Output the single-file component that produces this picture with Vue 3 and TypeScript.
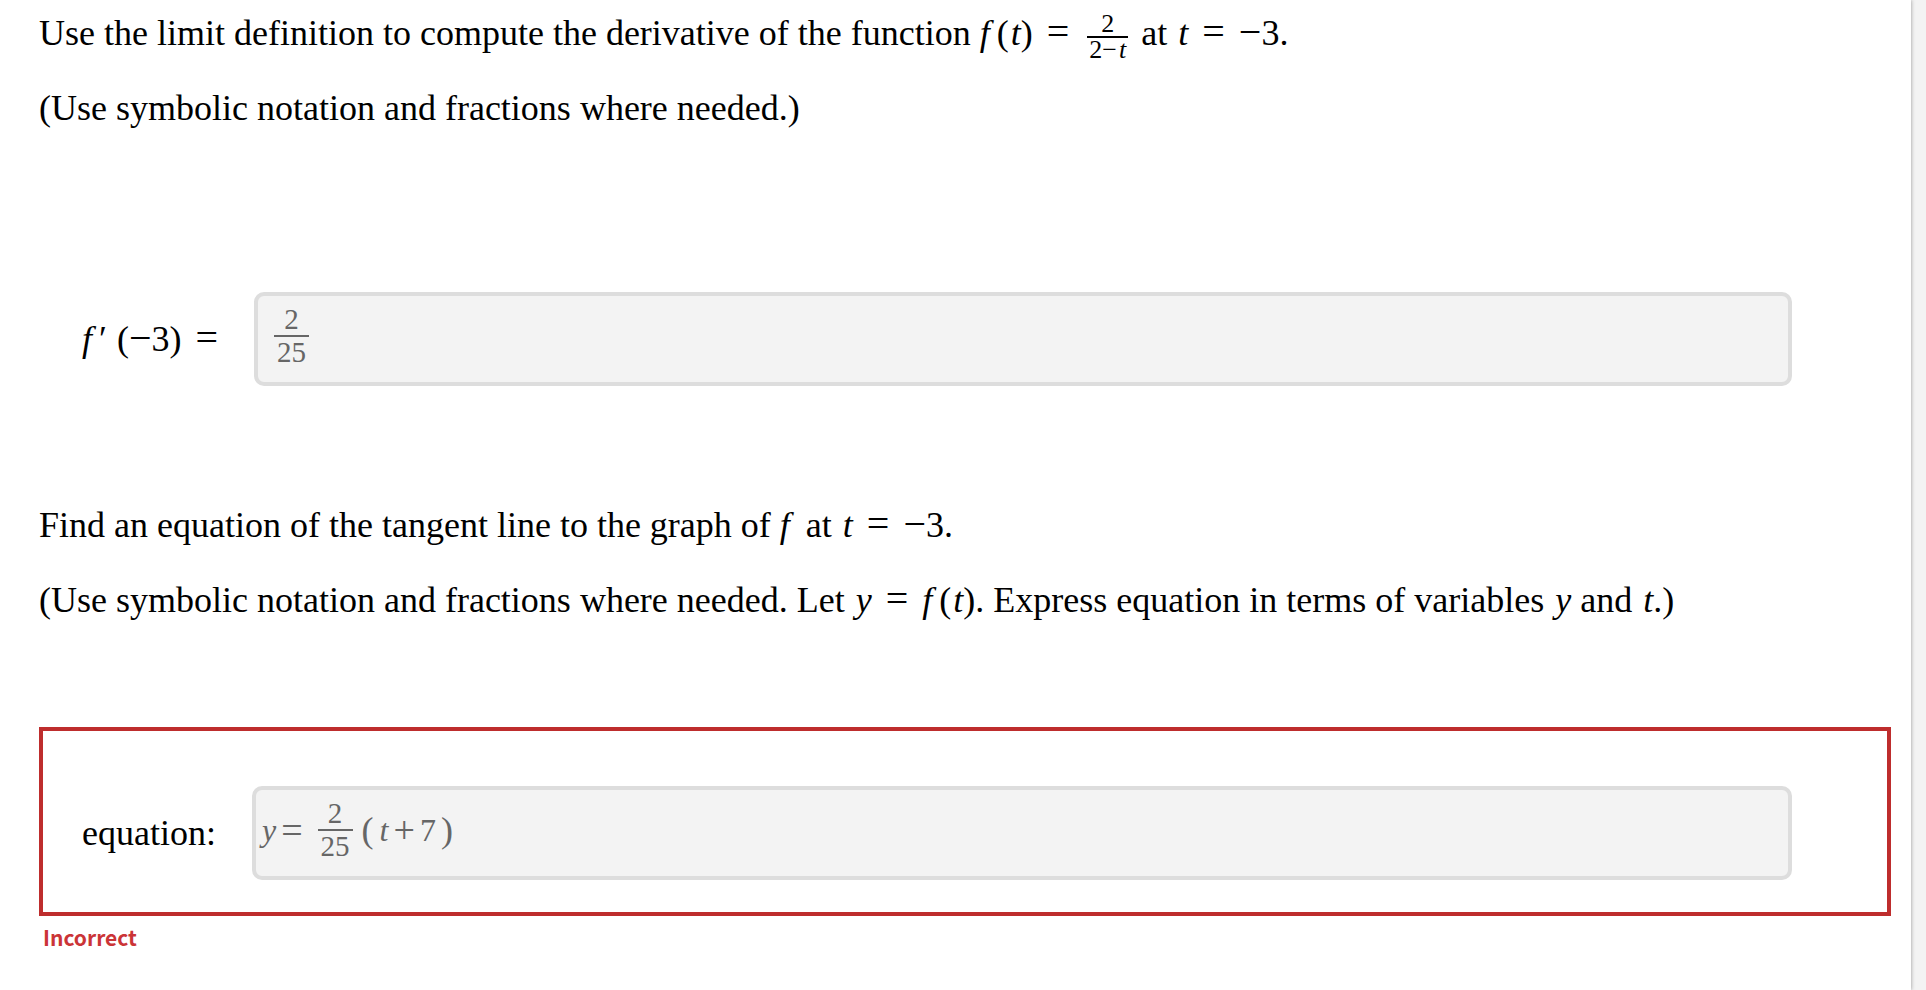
<script setup lang="ts">
import { ref } from 'vue'

const derivative = ref<string>('2/25')
const tangentLine = ref<string>('y=2/25(t+7)')
</script>

<template>
  <main class="panel">
    <section class="prompt">
      <p>
        Use the limit definition to compute the derivative of the function
        <span class="math"><i class="fn">f</i>(<i>t</i>)<span class="rel">=</span><span class="frac"><span>2</span><span class="den">2−<i>t</i></span></span></span>
        at <span class="math"><i>t</i><span class="rel">=</span><span class="sign">−</span>3.</span>
      </p>
      <p>(Use symbolic notation and fractions where needed.)</p>
    </section>

    <div class="answer">
      <label class="math" for="derivative"><i class="fn">f</i><span class="prime">′</span>(<span class="sign">−</span>3)<span class="rel last">=</span></label>
      <div class="field">
        <input id="derivative" v-model="derivative" type="text" readonly />
        <span class="entry inset" aria-hidden="true">
          <span class="frac"><span>2</span><span class="den">25</span></span>
        </span>
      </div>
    </div>

    <section class="prompt">
      <p>
        Find an equation of the tangent line to the graph of
        <i class="fn">f</i> at <span class="math"><i>t</i><span class="rel">=</span><span class="sign">−</span>3.</span>
      </p>
      <p>
        (Use symbolic notation and fractions where needed. Let
        <span class="math"><i>y</i><span class="rel">=</span><i class="fn">f</i>(<i>t</i>).</span>
        Express equation in terms of variables <i>y</i> and <i>t</i>.)
      </p>
    </section>

    <div class="answer wrong">
      <label for="tangent">equation:</label>
      <div class="field">
        <input id="tangent" v-model="tangentLine" type="text" readonly aria-describedby="feedback" />
        <span class="entry" aria-hidden="true">
          <i>y</i><span class="op">=</span>
          <span class="frac"><span>2</span><span class="den">25</span></span>
          <span class="paren">(</span><i>t</i><span class="op">+</span><span>7</span><span class="paren">)</span>
        </span>
      </div>
    </div>
    <p id="feedback" class="feedback">Incorrect</p>
  </main>
</template>

<style>
body {
  margin: 0;
  background: #f3f3f3;
}
</style>

<style scoped>
.panel {
  box-sizing: border-box;
  min-height: 100vh;
  margin-right: 15px;
  padding: 7px 20px 24px 39px;
  background: #fff;
  box-shadow: 0 0 4px rgba(0, 0, 0, 0.4);
  color: #000;
  font-family: "Liberation Serif", "Times New Roman", serif;
  font-size: 36px;
  line-height: 52px;
}

.prompt {
  display: flex;
  flex-direction: column;
  gap: 23px;
}

p {
  margin: 0;
}

i {
  margin-left: 2px;
}

.math {
  white-space: nowrap;
}

.fn {
  margin: 0 7px 0 0;
}

.rel,
.sign {
  font-size: 40px;
  line-height: 36px;
}

.rel {
  margin: 0 14px;
}

.rel.last {
  margin-right: 0;
}

.prime {
  margin-right: 10px;
}

.frac {
  display: inline-flex;
  flex-direction: column;
  align-items: stretch;
  margin: -8px 4px;
  font-size: 26px;
  line-height: 24px;
  text-align: center;
  vertical-align: middle;
}

.den {
  padding: 0 2px;
  border-top: 2px solid currentColor;
}

.answer {
  display: flex;
  align-items: center;
  gap: 36px;
  margin: 99px 0 77px;
  padding: 55px 95px 32px 39px;
  border: 4px solid transparent;
}

.wrong {
  margin: 101px 0 0;
  border-color: #be2d2d;
}

.field {
  display: grid;
  flex: 1;
  min-width: 0;
}

.field input,
.entry {
  grid-area: 1 / 1;
}

.field input {
  box-sizing: border-box;
  width: 100%;
  height: 94px;
  padding: 0 12px;
  border: 4px solid #ddd;
  border-radius: 10px;
  outline: none;
  background: #f3f3f3;
  color: transparent;
  font: inherit;
}

.entry {
  display: flex;
  align-items: center;
  gap: 5px;
  padding: 0 9px 7px;
  color: #666;
  font-size: 32px;
  pointer-events: none;
}

.entry.inset {
  padding-left: 20px;
}

.entry .op {
  font-size: 38px;
}

.entry .paren {
  font-size: 36px;
}

.entry .frac {
  margin: 0 4px 0 10px;
  font-size: 29px;
  line-height: 31px;
}

.entry i {
  margin-left: 1px;
}

.entry .den {
  padding: 0 3px;
}

.entry.inset .frac {
  margin: 0;
}

.feedback {
  margin-top: 5px;
  padding-left: 4px;
  color: #cb3437;
  font: 700 21px/32px "Noto Sans CJK SC", "Noto Sans", sans-serif;
}
</style>
